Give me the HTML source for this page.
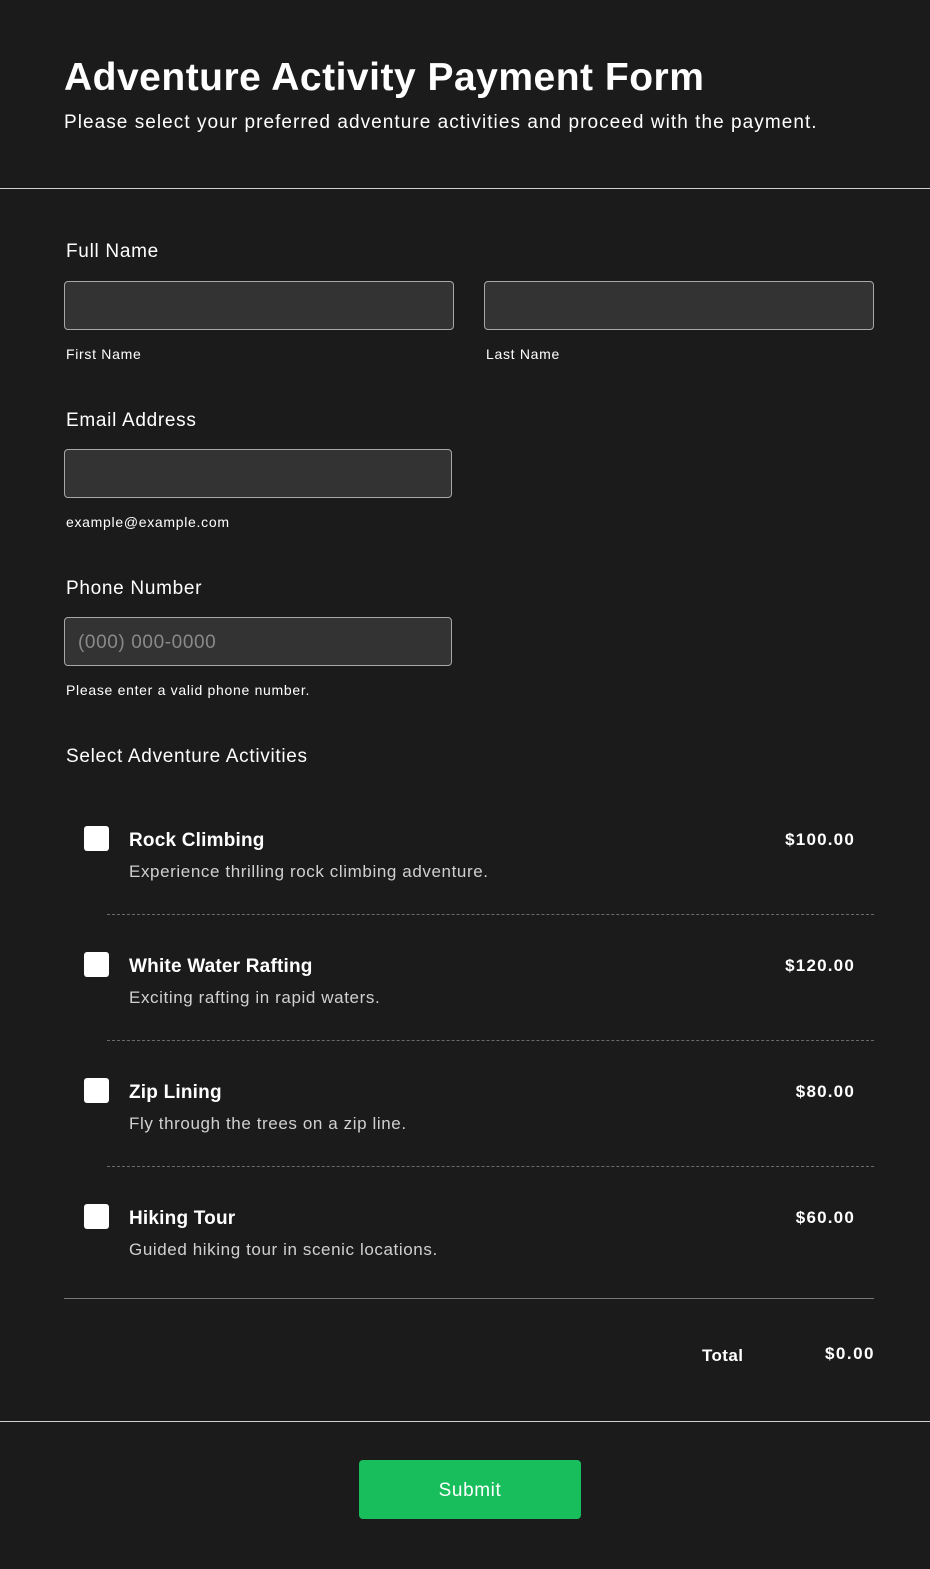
<!DOCTYPE html>
<html><head><meta charset="utf-8"><style>
*{box-sizing:border-box;margin:0;padding:0}
body{width:930px;height:1569px;background:#1b1b1b;color:#fff;font-family:"Liberation Sans",sans-serif;position:relative;overflow:hidden}
.a{position:absolute;white-space:nowrap}
.inp{position:absolute;height:49px;background:#333;border:1px solid #a8a8a8;border-radius:4px}
.lbl{font-size:19px;letter-spacing:0.7px}
.sub{font-size:14px;letter-spacing:0.7px}
.cb{position:absolute;left:84px;width:25px;height:25px;background:#fff;border-radius:3px}
.t{font-size:19px;font-weight:bold;left:129px;letter-spacing:0.2px}
.d{font-size:17px;color:#d0d0d0;left:129px;letter-spacing:0.6px}
.p{font-size:17px;font-weight:bold;right:75px;letter-spacing:1.2px}
.dash{position:absolute;left:107px;width:767px;border-top:1px dashed #6a6a6a}
</style></head><body>
<div class="a" style="left:64px;top:56px;font-size:39px;font-weight:bold;letter-spacing:0.5px">Adventure Activity Payment Form</div>
<div class="a" style="left:64px;top:112px;font-size:19px;letter-spacing:1.05px">Please select your preferred adventure activities and proceed with the payment.</div>
<div class="a" style="left:0;top:188px;width:930px;border-top:1px solid #cfcfcf"></div>

<div class="a lbl" style="left:66px;top:241px">Full Name</div>
<div class="inp" style="left:64px;top:281px;width:390px"></div>
<div class="inp" style="left:484px;top:281px;width:390px"></div>
<div class="a sub" style="left:66px;top:346px">First Name</div>
<div class="a sub" style="left:486px;top:346px">Last Name</div>

<div class="a lbl" style="left:66px;top:410px">Email Address</div>
<div class="inp" style="left:64px;top:449px;width:388px"></div>
<div class="a sub" style="left:66px;top:514px">example@example.com</div>

<div class="a lbl" style="left:66px;top:578px">Phone Number</div>
<div class="inp" style="left:64px;top:617px;width:388px"></div>
<div class="a" style="left:78px;top:632px;font-size:19px;color:#8a8a8a;letter-spacing:0.6px">(000) 000-0000</div>
<div class="a sub" style="left:66px;top:682px">Please enter a valid phone number.</div>

<div class="a lbl" style="left:66px;top:746px">Select Adventure Activities</div>

<div class="cb" style="top:826px"></div>
<div class="a t" style="top:830px">Rock Climbing</div>
<div class="a d" style="top:862px">Experience thrilling rock climbing adventure.</div>
<div class="a p" style="top:830px">$100.00</div>
<div class="dash" style="top:914px"></div>

<div class="cb" style="top:952px"></div>
<div class="a t" style="top:956px">White Water Rafting</div>
<div class="a d" style="top:988px">Exciting rafting in rapid waters.</div>
<div class="a p" style="top:956px">$120.00</div>
<div class="dash" style="top:1040px"></div>

<div class="cb" style="top:1078px"></div>
<div class="a t" style="top:1082px">Zip Lining</div>
<div class="a d" style="top:1114px">Fly through the trees on a zip line.</div>
<div class="a p" style="top:1082px">$80.00</div>
<div class="dash" style="top:1166px"></div>

<div class="cb" style="top:1204px"></div>
<div class="a t" style="top:1208px">Hiking Tour</div>
<div class="a d" style="top:1240px">Guided hiking tour in scenic locations.</div>
<div class="a p" style="top:1208px">$60.00</div>

<div class="a" style="left:64px;top:1298px;width:810px;border-top:1px solid #777"></div>
<div class="a" style="left:702px;top:1346px;font-size:17px;font-weight:bold;letter-spacing:0.4px">Total</div>
<div class="a" style="right:55px;top:1344px;font-size:17px;font-weight:bold;letter-spacing:1.5px">$0.00</div>

<div class="a" style="left:0;top:1421px;width:930px;border-top:1px solid #cfcfcf"></div>
<div class="a" style="left:359px;top:1460px;width:222px;height:59px;background:#18be5c;border-radius:4px;font-size:19px;line-height:61px;text-align:center;letter-spacing:0.6px">Submit</div>
</body></html>
